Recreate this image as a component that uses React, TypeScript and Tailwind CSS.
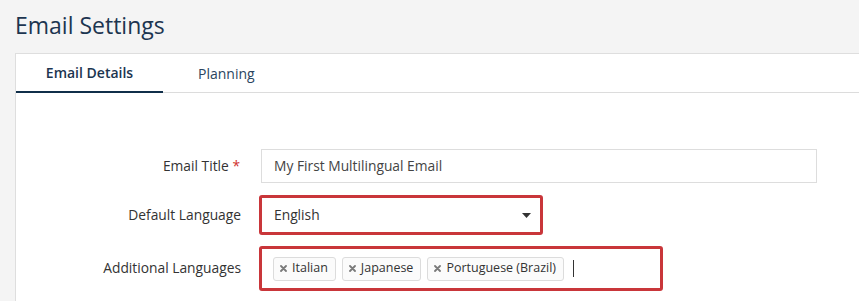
import React from 'react';

const font = { fontFamily: '"Open Sans", "Noto Sans", sans-serif' };

function Tag({ label }: { label: string }) {
  return (
    <span className="inline-flex h-[24px] items-center gap-[5px] rounded-[3px] border border-[#dcdcdc] bg-[#fbfbfb] pl-[6px] pr-[7px] text-[12.5px] text-[#333]">
      <svg width="7" height="7" viewBox="0 0 7 7" className="text-[#7a7a7a]">
        <path d="M1 1L6 6M6 1L1 6" stroke="currentColor" strokeWidth="1.8" strokeLinecap="round" />
      </svg>
      {label}
    </span>
  );
}

export default function App() {
  return (
    <div className="h-[301px] w-[859px] overflow-hidden bg-[#f4f4f4]" style={font}>
      <h1 className="h-[53px] pl-[15px] pt-[8px] text-[23px] leading-[34px] text-[#1c3550]">Email Settings</h1>

      <div className="ml-[15px] h-full border-l border-t border-[#dedede] bg-white">
        <div className="flex h-[39px] border-b border-[#dcdcdc]">
          <button
            type="button"
            className="-mb-px w-[147px] border-b-2 border-[#102f4a] text-[14px] font-semibold text-[#1c3550]"
          >
            Email Details
          </button>
          <button type="button" className="px-[35px] text-[14px] text-[#2a4560]">
            Planning
          </button>
        </div>

        <div className="pt-[56px] text-[13.8px]">
          <div className="flex items-center">
            <label className="w-[225px] pr-[1px] text-right text-[#333]">
              Email Title <span className="text-[#d0312d]">*</span>
            </label>
            <div className="ml-[20px] flex h-[34px] w-[556px] items-center border border-[#dddddd] px-[12px] text-[#444]">
              My First Multilingual Email
            </div>
          </div>

          <div className="mt-[12px] flex items-center">
            <label className="w-[225px] text-right text-[#333]">Default Language</label>
            <div className="ml-[18px] flex h-[40px] w-[284px] items-center justify-between rounded-[3px] border-[3px] border-[#c9363a] pl-[12px] pr-[9px] text-[#333]">
              <span>English</span>
              <svg width="9" height="5" viewBox="0 0 9 5">
                <path d="M0 0H9L4.5 5Z" fill="#333" />
              </svg>
            </div>
          </div>

          <div className="mt-[11px] flex items-center">
            <label className="w-[225px] text-right text-[#333]">Additional Languages</label>
            <div className="ml-[18px] flex h-[45px] w-[404px] items-center gap-[6px] rounded-[3px] border-[3px] border-[#c9363a] pl-[11px]">
              <Tag label="Italian" />
              <Tag label="Japanese" />
              <Tag label="Portuguese (Brazil)" />
              <span className="ml-[3px] h-[17px] w-px bg-[#333]" />
            </div>
          </div>
        </div>
      </div>
    </div>
  );
}
